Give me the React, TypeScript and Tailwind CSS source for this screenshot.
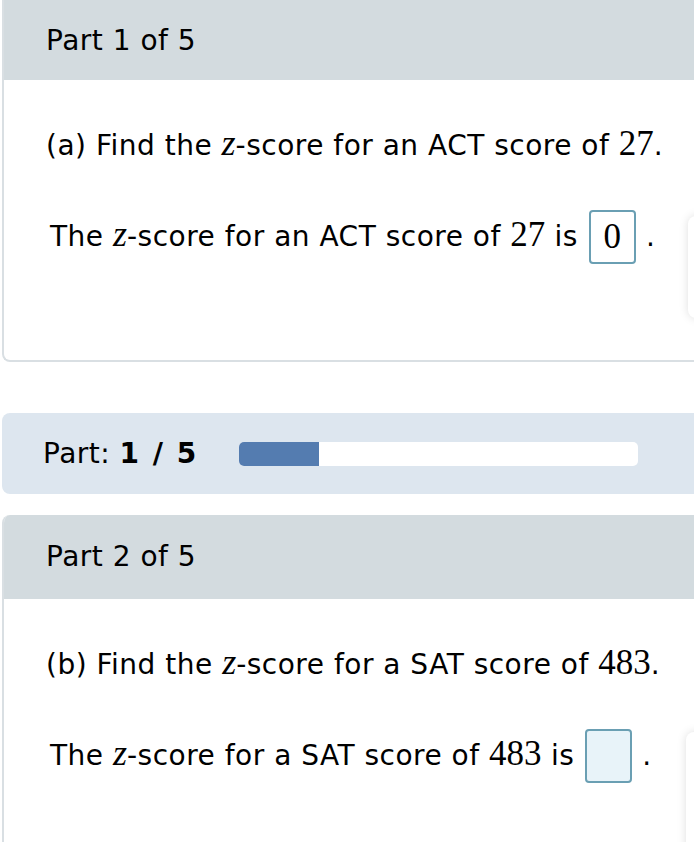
const Z = () => (
  <span className="italic font-['Liberation_Serif',serif] text-[36px] tracking-normal leading-none">z</span>
);

const Num = ({ children }: { children: React.ReactNode }) => (
  <span className="font-['Liberation_Serif',serif] text-[35px] tracking-normal leading-none">{children}</span>
);

const AnswerBox = ({ value, filled }: { value?: string; filled?: boolean }) => (
  <span
    className={`inline-flex items-center justify-center w-[47px] h-[54px] ml-[11px] mr-[10px] rounded-[4px] border-2 border-[#6a9fb3] font-['Liberation_Serif',serif] text-[35px] ${
      filled ? "bg-white" : "bg-[#e8f3f9]"
    }`}
  >
    {value}
  </span>
);

const PartCard = ({
  title,
  question,
  answer,
  first,
}: {
  title: string;
  question: React.ReactNode;
  answer: React.ReactNode;
  first?: boolean;
}) => (
  <div
    className={`w-[720px] ml-[2px] border-l-2 border-b-2 border-[#d9dfe3] bg-white overflow-hidden ${
      first ? "rounded-b-[8px]" : "rounded-[8px]"
    }`}
  >
    <div
      className={`bg-[#d3dbdf] flex items-center pl-[42px] text-[28px] ${
        first ? "h-[80px] pt-[2px]" : "h-[84px]"
      }`}
    >
      {title}
    </div>
    <div className="pl-[42px] pt-[44px] pb-[96px]">
      <div className="text-[28px] h-[44px] flex items-center">{question}</div>
      <div className="text-[28px] h-[54px] mt-[42px] pl-[4px] flex items-center">{answer}</div>
    </div>
  </div>
);

export default function App() {
  return (
    <div className="relative w-[694px] h-[842px] overflow-hidden bg-white text-black font-['DejaVu_Sans',Verdana,sans-serif] tracking-[0.5px]">
      <PartCard
        first
        title="Part 1 of 5"
        question={
          <span>
            (a) Find the <Z />-score for an ACT score of <Num>27</Num>.
          </span>
        }
        answer={
          <>
            <span>
              The <Z />-score for an ACT score of <Num>27</Num> is
            </span>
            <AnswerBox value="0" filled />
            <span>.</span>
          </>
        }
      />

      <div className="mt-[51px] ml-[2px] w-[720px] h-[81px] rounded-[8px] bg-[#dde6ef] flex items-center pl-[41px]">
        <span className="text-[28px] w-[196px]">
          Part: <b className="tracking-[2px]">1 / 5</b>
        </span>
        <div className="w-[399px] h-[24px] rounded-[5px] bg-white overflow-hidden">
          <div className="w-[80px] h-full bg-[#547cb0]" />
        </div>
      </div>

      <div className="mt-[21px]">
        <PartCard
          title="Part 2 of 5"
          question={
            <span>
              (b) Find the <Z />-score for a SAT score of <Num>483</Num>.
            </span>
          }
          answer={
            <>
              <span>
                The <Z />-score for a SAT score of <Num>483</Num> is
              </span>
              <AnswerBox />
              <span>.</span>
            </>
          }
        />
      </div>

      <div className="absolute left-[688px] top-[216px] w-[40px] h-[102px] bg-white rounded-[8px] shadow-[0_0_10px_rgba(0,0,0,0.13)]" />
      <div className="absolute left-[686px] top-[732px] w-[40px] h-[140px] bg-white rounded-[8px] shadow-[0_0_10px_rgba(0,0,0,0.13)]" />
    </div>
  );
}
